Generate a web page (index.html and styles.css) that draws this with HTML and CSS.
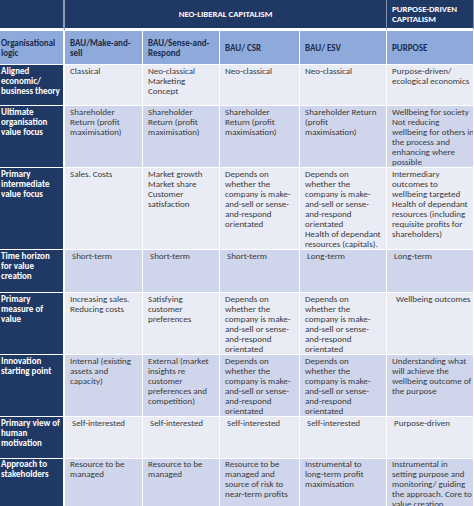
FILE: index.html
```html
<!DOCTYPE html>
<html>
<head>
<meta charset="utf-8">
<link rel="stylesheet" href="styles.css">
</head>
<body>
<div class="frame">
<table class="grid">
  <colgroup>
    <col class="c0"><col class="c1"><col class="c2"><col class="c3"><col class="c4"><col class="c5">
  </colgroup>
  <tr class="r-top">
    <td class="dark"></td>
    <td class="dark top center" colspan="4">NEO-LIBERAL CAPITALISM</td>
    <td class="dark top">PURPOSE-DRIVEN<br>CAPITALISM</td>
  </tr>
  <tr class="r-sub">
    <td class="sub">Organisational<br>logic</td>
    <td class="sub">BAU/Make-and-<br>sell</td>
    <td class="sub">BAU/Sense-and-<br>Respond</td>
    <td class="sub">BAU/ CSR</td>
    <td class="sub">BAU/ ESV</td>
    <td class="sub">PURPOSE</td>
  </tr>
  <tr class="r1 lite">
    <th>Aligned<br>economic/<br>business theory</th>
    <td>Classical</td>
    <td>Neo-classical<br>Marketing<br>Concept</td>
    <td>Neo-classical</td>
    <td>Neo-classical</td>
    <td>Purpose-driven/<br>ecological economics</td>
  </tr>
  <tr class="r2 deep">
    <th>Ultimate<br>organisation<br>value focus</th>
    <td>Shareholder<br>Return (profit<br>maximisation)</td>
    <td>Shareholder<br>Return (profit<br>maximisation)</td>
    <td>Shareholder<br>Return (profit<br>maximisation)</td>
    <td>Shareholder Return<br>(profit<br>maximisation)</td>
    <td>Wellbeing for society<br>Not reducing<br>wellbeing for others in<br>the process and<br>enhancing where<br>possible</td>
  </tr>
  <tr class="r3 lite">
    <th>Primary<br>intermediate<br>value focus</th>
    <td>Sales. Costs</td>
    <td>Market growth<br>Market share<br>Customer<br>satisfaction</td>
    <td>Depends on<br>whether the<br>company is make-<br>and-sell or sense-<br>and-respond<br>orientated</td>
    <td>Depends on<br>whether the<br>company is make-<br>and-sell or sense-<br>and-respond<br>orientated<br>Health of dependant<br>resources (capitals).</td>
    <td>Intermediary<br>outcomes to<br>wellbeing targeted<br>Health of dependant<br>resources (including<br>requisite profits for<br>shareholders)</td>
  </tr>
  <tr class="r4 deep">
    <th>Time horizon<br>for value<br>creation</th>
    <td class="ind">Short-term</td>
    <td class="ind">Short-term</td>
    <td class="ind">Short-term</td>
    <td class="ind">Long-term</td>
    <td class="ind">Long-term</td>
  </tr>
  <tr class="r5 lite">
    <th>Primary<br>measure of<br>value</th>
    <td>Increasing sales.<br>Reducing costs</td>
    <td>Satisfying<br>customer<br>preferences</td>
    <td>Depends on<br>whether the<br>company is make-<br>and-sell or sense-<br>and-respond<br>orientated</td>
    <td>Depends on<br>whether the<br>company is make-<br>and-sell or sense-<br>and-respond<br>orientated</td>
    <td class="ind2">Wellbeing outcomes</td>
  </tr>
  <tr class="r6 deep">
    <th>Innovation<br>starting point</th>
    <td>Internal (existing<br>assets and<br>capacity)</td>
    <td>External (market<br>insights re<br>customer<br>preferences and<br>competition)</td>
    <td>Depends on<br>whether the<br>company is make-<br>and-sell or sense-<br>and-respond<br>orientated</td>
    <td>Depends on<br>whether the<br>company is make-<br>and-sell or sense-<br>and-respond<br>orientated</td>
    <td>Understanding what<br>will achieve the<br>wellbeing outcome of<br>the purpose</td>
  </tr>
  <tr class="r7 lite">
    <th>Primary view of<br>human<br>motivation</th>
    <td class="ind">Self-interested</td>
    <td class="ind">Self-interested</td>
    <td class="ind">Self-interested</td>
    <td class="ind">Self-interested</td>
    <td class="ind">Purpose-driven</td>
  </tr>
  <tr class="r8 deep">
    <th>Approach to<br>stakeholders</th>
    <td>Resource to be<br>managed</td>
    <td>Resource to be<br>managed</td>
    <td>Resource to be<br>managed and<br>source of risk to<br>near-term profits</td>
    <td>Instrumental to<br>long-term profit<br>maximisation</td>
    <td>Instrumental in<br>setting purpose and<br>monitoring/ guiding<br>the approach. Core to<br>value creation</td>
  </tr>
</table>
</div>
</body>
</html>
```

FILE: styles.css
```css
html, body {
  margin: 0;
  padding: 0;
  background: #ffffff;
}

.frame {
  width: 474px;
  height: 506px;
  overflow: hidden;
}

.grid {
  table-layout: fixed;
  width: 476px;
  border-collapse: separate;
  border-spacing: 0;
  margin-left: -2px;
  font-family: Carlito, Lato, "Liberation Sans", sans-serif;
  font-size: 9px;
  line-height: 10px;
  color: #3a3a3a;
}

.c0 { width: 67px; }
.c1 { width: 78px; }
.c2 { width: 77px; }
.c3 { width: 80px; }
.c4 { width: 87px; }
.c5 { width: 87px; }

.grid td,
.grid th {
  padding: 1px 0 0 5px;
  vertical-align: top;
  text-align: left;
  white-space: nowrap;
  overflow: hidden;
  border-right: 1px solid #ffffff;
  border-bottom: 1px solid #ffffff;
}

.grid th {
  background: #1f3864;
  color: #ffffff;
  font-weight: bold;
  padding-left: 3px;
  border-right: 2px solid #ffffff;
}

.dark {
  background: #1f3864;
  color: #ffffff;
  font-weight: bold;
}

.r-top td {
  border-bottom: 3px solid #ffffff;
  border-right: 1px solid #7f8fb0;
  vertical-align: middle;
  font-size: 8.8px;
  padding-top: 0;
}

.r-top td:first-child {
  border-right: 2px solid #8e9cb8;
}

.top.center {
  text-align: center;
  padding-left: 0;
}

.sub {
  background: #8eaadb;
  color: #1b2a4a;
  font-weight: bold;
  vertical-align: middle !important;
}

.r-sub td:first-child {
  padding-left: 3px;
  border-right: 2px solid #ffffff;
}

.lite td { background: #e9ebf5; }
.deep td { background: #cfd5ea; }

.r-top { height: 31px; }
.r-sub { height: 34px; }
.r1 { height: 41px; }
.r2 { height: 61px; }
.r3 { height: 81px; }
.r4 { height: 43px; }
.r5 { height: 61px; }
.r6 { height: 60px; }
.r7 { height: 42px; }
.r8 { height: 60px; }

.r8 td,
.r8 th {
  padding-top: 0;
}

.ind { padding-left: 7px !important; }
.ind2 { padding-left: 9px !important; }
```
